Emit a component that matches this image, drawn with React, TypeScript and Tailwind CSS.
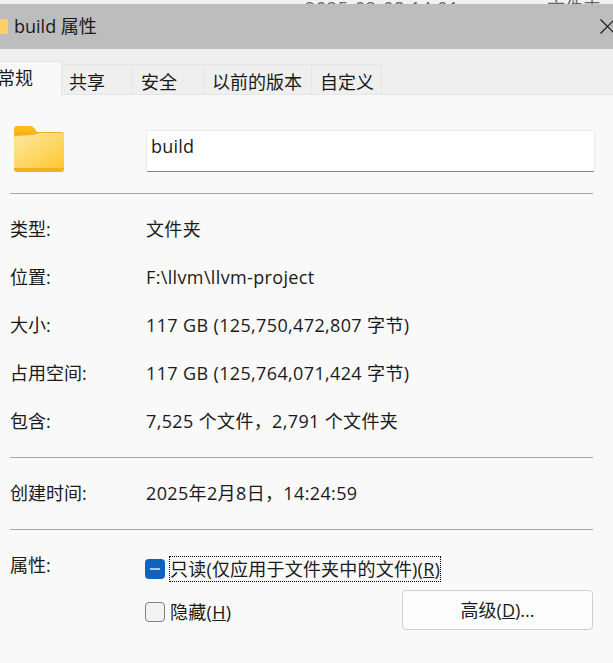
import React from "react";

const FONT = "font-['Open_Sans','Noto_Sans_CJK_SC',sans-serif]";

const FolderIcon: React.FC<{ className?: string }> = ({ className }) => (
  <svg viewBox="0 0 50 46" className={className}>
    <defs>
      <linearGradient id="folderFill" x1="0" y1="0" x2="1" y2="1">
        <stop offset="0" stopColor="#ffe8a4" />
        <stop offset="1" stopColor="#fdc830" />
      </linearGradient>
    </defs>
    <path d="M0 3a3 3 0 0 1 3-3h13q3 0 5 3l2 3v4H0z" fill="#fdbb17" />
    <path d="M0 9q0-3 3-3h44q3 0 3 3v34q0 3-3 3H3q-3 0-3-3z" fill="#f3b21c" />
    <path d="M0 12q0-2 2-2l15-1q3 0 5-1l4-1h21q3 0 3 2v33H0z" fill="url(#folderFill)" />
  </svg>
);

const InfoRow: React.FC<{ label: string; value: string }> = ({ label, value }) => (
  <div className="flex items-center h-12">
    <div className="w-[136px]">{label}</div>
    <div className="tracking-[0.36px]">{value}</div>
  </div>
);

const Divider = () => <div className="h-px bg-[#a6a6a6]" />;

const tabs = [
  { name: "共享", w: "w-[70px]", pl: "pl-[7px]" },
  { name: "安全", w: "w-[72px]", pl: "pl-[9px]" },
  { name: "以前的版本", w: "w-[108px]", pl: "pl-[8px]" },
  { name: "自定义", w: "w-[70px]", pl: "pl-[8px]" },
];

export default function App() {
  return (
    <div className={`w-[613px] h-[663px] overflow-hidden bg-[#f9f9f9] text-[18px] leading-6 text-[#1a1a1a] ${FONT}`}>
      {/* window behind, only the top of the row shows */}
      <div className="h-1 bg-[#f1f1f1] overflow-hidden relative text-[#666]">
        <span className="absolute left-[305px] top-[-4px] whitespace-nowrap tracking-[0.6px]">2025-02-08 14:01</span>
        <span className="absolute left-[547px] top-[-4px] whitespace-nowrap">文件夹</span>
      </div>

      <div className="h-[45px] bg-[#bdbdbd] flex items-center overflow-hidden">
        <div className="w-2 h-[15px] bg-[#fcd064] rounded-r-[2px] mr-[6px] shrink-0" />
        <span className="flex-1 pb-[2px]">build 属性</span>
        <svg viewBox="0 0 15 15" className="w-[15px] h-[15px] mr-[-2px] shrink-0" stroke="#1a1a1a" strokeWidth="1.2">
          <path d="M0.5 0.5l14 14M14.5 0.5l-14 14" />
        </svg>
      </div>

      <div className="h-[46px] bg-[#efefef] flex items-end border-b border-[#e5e5e5]">
        <div className="w-[62px] h-[34px] bg-[#f9f9f9] border-r border-t border-[#e5e5e5] rounded-tr-[3px] overflow-hidden flex items-center justify-end pr-[28px] pb-[2px] mb-[-1px]">
          <span className="whitespace-nowrap shrink-0">常规</span>
        </div>
        {tabs.map((tab) => (
          <div
            key={tab.name}
            className={`${tab.w} ${tab.pl} h-[30px] border-r border-t border-[#e5e5e5] flex items-center pt-[5px]`}
          >
            {tab.name}
          </div>
        ))}
      </div>

      <div className="px-[10px] w-[603px]">
        <div className="flex items-start pt-[31px] h-[98px]">
          <div className="w-[136px] shrink-0">
            <FolderIcon className="w-[50px] h-[46px] ml-1" />
          </div>
          <div className="w-[449px] h-[42px] mt-[4px] bg-white border border-[#ececec] border-b-[#868686] rounded-[2px] pl-1 pb-[10px] shrink-0 flex items-center tracking-[0.2px]">
            build
          </div>
        </div>
        <Divider />

        <div className="pt-[11px] pb-[12px]">
          <InfoRow label="类型:" value="文件夹" />
          <InfoRow label="位置:" value="F:\llvm\llvm-project" />
          <InfoRow label="大小:" value="117 GB (125,750,472,807 字节)" />
          <InfoRow label="占用空间:" value="117 GB (125,764,071,424 字节)" />
          <InfoRow label="包含:" value="7,525 个文件，2,791 个文件夹" />
        </div>
        <Divider />

        <div className="pt-[11px] pb-[12px]">
          <InfoRow label="创建时间:" value="2025年2月8日，14:24:59" />
        </div>
        <Divider />

        <div className="flex pt-[23px]">
          <div className="w-[135px] shrink-0">属性:</div>
          <div className="flex-1 pt-[4px]">
            <div className="flex items-center h-6">
              <div className="w-5 h-5 rounded-[4px] bg-[#0f62be] flex items-center justify-center shrink-0">
                <div className="w-[10px] h-[2px] bg-[#a9c8ea]" />
              </div>
              <span className="ml-[4px] border border-dotted border-black whitespace-nowrap tracking-[0.2px]">
                只读(仅应用于文件夹中的文件)(<span className="underline">R</span>)
              </span>
            </div>
            <div className="flex items-center justify-between mt-[9px]">
              <div className="flex items-center mt-1">
                <div className="w-5 h-5 rounded-[4px] bg-[#f3f3f3] border border-[#808080]" />
                <span className="ml-[5px] tracking-[0.3px]">
                  隐藏(<span className="underline">H</span>)
                </span>
              </div>
              <button className="w-[191px] h-[40px] bg-[#fdfdfd] border border-[#cfcfcf] rounded-[4px]">
                高级(<span className="underline">D</span>)...
              </button>
            </div>
          </div>
        </div>
      </div>
    </div>
  );
}
